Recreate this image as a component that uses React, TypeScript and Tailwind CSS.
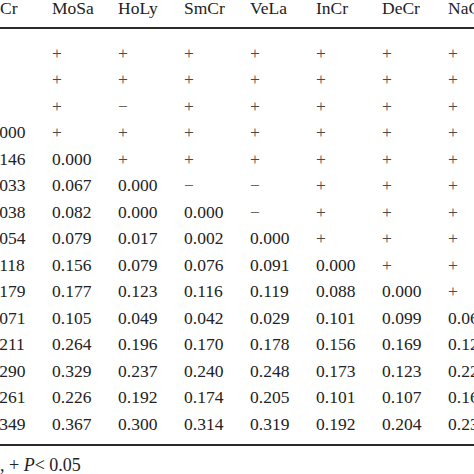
import React from "react";

const headers = ["PaCr", "MoSa", "HoLy", "SmCr", "VeLa", "InCr", "DeCr", "NaCr"];

const rows: string[][] = [
  ["+", "+", "+", "+", "+", "+", "+", "+"],
  ["+", "+", "+", "+", "+", "+", "+", "+"],
  ["+", "+", "−", "+", "+", "+", "+", "+"],
  ["0.000", "+", "+", "+", "+", "+", "+", "+"],
  ["0.146", "0.000", "+", "+", "+", "+", "+", "+"],
  ["0.033", "0.067", "0.000", "−", "−", "+", "+", "+"],
  ["0.038", "0.082", "0.000", "0.000", "−", "+", "+", "+"],
  ["0.054", "0.079", "0.017", "0.002", "0.000", "+", "+", "+"],
  ["0.118", "0.156", "0.079", "0.076", "0.091", "0.000", "+", "+"],
  ["0.179", "0.177", "0.123", "0.116", "0.119", "0.088", "0.000", "+"],
  ["0.071", "0.105", "0.049", "0.042", "0.029", "0.101", "0.099", "0.064"],
  ["0.211", "0.264", "0.196", "0.170", "0.178", "0.156", "0.169", "0.123"],
  ["0.290", "0.329", "0.237", "0.240", "0.248", "0.173", "0.123", "0.222"],
  ["0.261", "0.226", "0.192", "0.174", "0.205", "0.101", "0.107", "0.163"],
  ["0.349", "0.367", "0.300", "0.314", "0.319", "0.192", "0.204", "0.232"],
];

export default function App() {
  return (
    <div
      className="w-[474px] h-[474px] overflow-hidden bg-white text-[#222222] antialiased"
      style={{ fontFamily: '"Liberation Serif", "Times New Roman", serif' }}
    >
      <div className="ml-[-14px] w-[540px]">
        <div className="grid grid-cols-[repeat(8,66px)] h-[27px] text-[17.5px] leading-[17px]">
          {headers.map((h, i) => (
            <div key={i} className="whitespace-nowrap">
              {i === 0 ? <span className="pl-[14px]">Cr</span> : h}
            </div>
          ))}
        </div>
        <div className="h-[2px] bg-[#2a2a2a]" />
        <div className="pt-[10.5px] pb-[6.5px]">
          {rows.map((r, ri) => (
            <div
              key={ri}
              className="grid grid-cols-[repeat(8,66px)] h-[26.5px] text-[17.5px] leading-[26.5px]"
            >
              {r.map((c, ci) => (
                <div
                  key={ci}
                  className={
                    c === "+" || c === "−"
                      ? "text-[#4a4a4a] whitespace-nowrap"
                      : "whitespace-nowrap"
                  }
                >
                  {c}
                </div>
              ))}
            </div>
          ))}
        </div>
        <div className="h-[2px] bg-[#2a2a2a]" />
      </div>
      <div className="mt-[10px] text-[18px] leading-[18px] whitespace-nowrap">
        , + <span className="italic">P</span>&lt; 0.05
      </div>
    </div>
  );
}
